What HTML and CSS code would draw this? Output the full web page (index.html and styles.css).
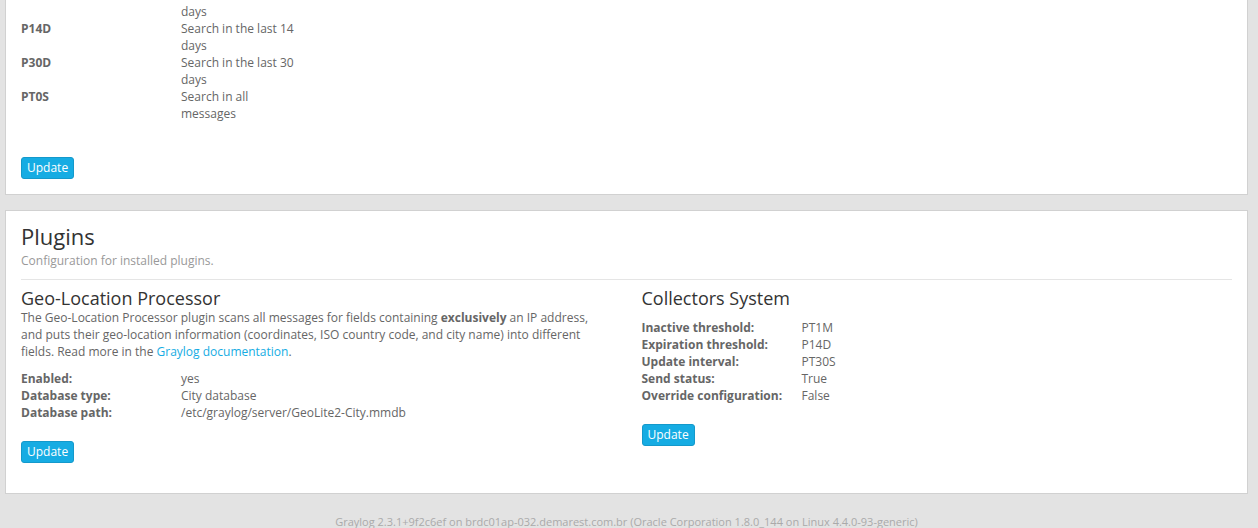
FILE: index.html
```html
<!DOCTYPE html>
<html lang="en">
<head>
<meta charset="utf-8">
<title>Graylog - Configurations</title>
<link rel="stylesheet" href="styles.css">
</head>
<body>
<div class="page">
  <section class="content content-search">
    <dl class="deflist deflist-narrow">
      <dt>P7D</dt><dd>Search in the last 7 days</dd>
      <dt>P14D</dt><dd>Search in the last 14 days</dd>
      <dt>P30D</dt><dd>Search in the last 30 days</dd>
      <dt>PT0S</dt><dd>Search in all messages</dd>
    </dl>
    <button class="btn btn-search" type="button">Update</button>
  </section>

  <section class="content">
    <h2 class="page-title">Plugins</h2>
    <p class="description">Configuration for installed plugins.</p>
    <hr class="divider">
    <div class="row">
      <div class="col">
        <h3 class="section-title">Geo-Location Processor</h3>
        <p class="intro">The Geo-Location Processor plugin scans all messages for fields containing <strong>exclusively</strong> an IP address, and puts their geo-location information (coordinates, ISO country code, and city name) into different fields. Read more in the <a href="#" class="link">Graylog documentation</a>.</p>
        <dl class="deflist">
          <dt>Enabled:</dt><dd>yes</dd>
          <dt>Database type:</dt><dd>City database</dd>
          <dt>Database path:</dt><dd>/etc/graylog/server/GeoLite2-City.mmdb</dd>
        </dl>
        <button class="btn btn-geo" type="button">Update</button>
      </div>
      <div class="col">
        <h3 class="section-title section-title-spaced">Collectors System</h3>
        <dl class="deflist">
          <dt>Inactive threshold:</dt><dd>PT1M</dd>
          <dt>Expiration threshold:</dt><dd>P14D</dd>
          <dt>Update interval:</dt><dd>PT30S</dd>
          <dt>Send status:</dt><dd>True</dd>
          <dt>Override configuration:</dt><dd>False</dd>
        </dl>
        <button class="btn btn-collectors" type="button">Update</button>
      </div>
    </div>
  </section>

  <footer class="footer">Graylog 2.3.1+9f2c6ef on brdc01ap-032.demarest.com.br (Oracle Corporation 1.8.0_144 on Linux 4.4.0-93-generic)</footer>
</div>
</body>
</html>
```

FILE: styles.css
```css
* {
  box-sizing: border-box;
}

html, body {
  margin: 0;
  padding: 0;
  background: #e3e3e3;
  height: 100%;
  overflow: hidden;
}

body {
  font-family: "Open Sans", "DejaVu Sans", sans-serif;
  font-size: 12px;
  line-height: 17px;
  color: #666;
}

.page {
  padding: 0 10px 0 5px;
}

.content {
  background: #fff;
  border: 1px solid #d1d1d1;
  padding: 15px 15px 15px 15px;
  margin-bottom: 15px;
}

.content-search {
  margin-top: -30px;
}

.deflist {
  display: grid;
  grid-template-columns: 160px 1fr;
  margin: 0;
}

.deflist-narrow {
  grid-template-columns: 160px 118px;
}

.deflist dt {
  font-weight: 700;
  margin: 0;
}

.deflist dd {
  margin: 0;
}

.btn {
  display: inline-block;
  font-family: "Open Sans", "DejaVu Sans", sans-serif;
  font-size: 12px;
  line-height: 18px;
  padding: 1px 5px;
  color: #fff;
  background: #16ace3;
  border: 1px solid #1499cb;
  border-radius: 3px;
  cursor: pointer;
}

.btn-search {
  margin-top: 35px;
  vertical-align: top;
}

.page-title {
  font-size: 22px;
  font-weight: 400;
  line-height: 1.1;
  color: #333;
  margin: -2px 0 4px 0;
}

.description {
  margin: 0;
  color: #999;
}

.divider {
  border: 0;
  border-top: 1px solid #e5e5e5;
  margin: 10px 0 9px 0;
  height: 0;
}

.row {
  display: grid;
  grid-template-columns: 1fr 1fr;
  column-gap: 30px;
}

.section-title {
  font-size: 18px;
  font-weight: 400;
  line-height: 1.1;
  color: #333;
  margin: 0;
}

.section-title-spaced {
  margin-bottom: 10px;
}

.intro {
  margin: 0 0 10px 0;
}

.intro strong {
  font-weight: 700;
}

.link {
  color: #16ace3;
  text-decoration: none;
}

.btn-geo {
  margin: 20px 0 15px 0;
}

.btn-collectors {
  margin-top: 20px;
}

.footer {
  text-align: center;
  font-size: 11px;
  line-height: 17px;
  color: #aaa;
  padding-top: 4px;
}
```
